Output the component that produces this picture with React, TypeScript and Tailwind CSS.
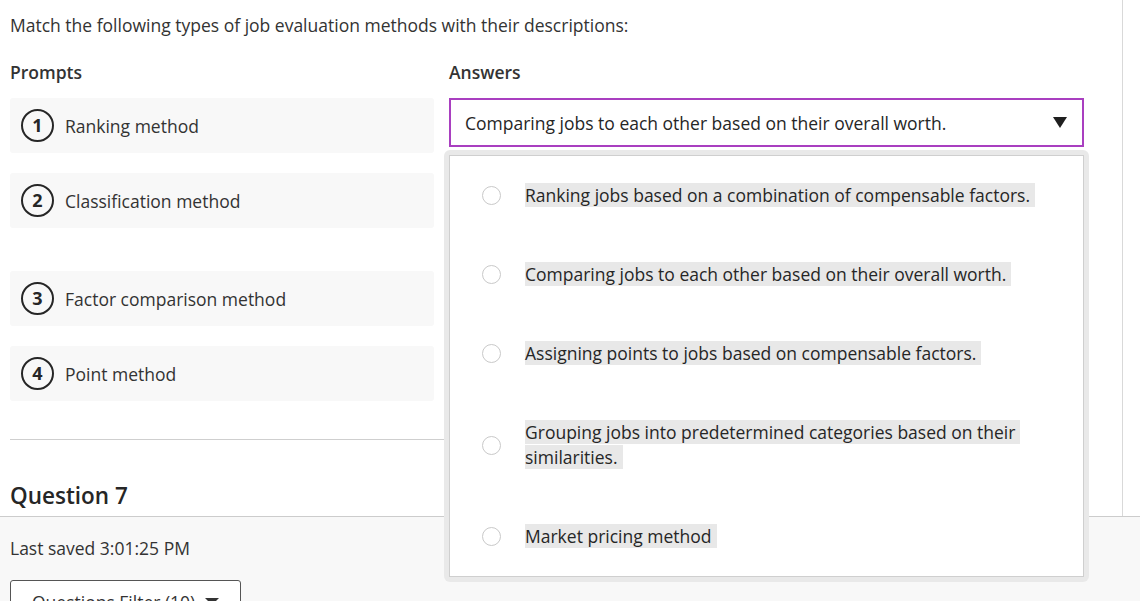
import React from "react";

const prompts = [
  { n: 1, text: "Ranking method", mt: "mt-0" },
  { n: 2, text: "Classification method", mt: "mt-[20px]" },
  { n: 3, text: "Factor comparison method", mt: "mt-[43px]" },
  { n: 4, text: "Point method", mt: "mt-[20px]" },
];

const options = [
  "Ranking jobs based on a combination of compensable factors.",
  "Comparing jobs to each other based on their overall worth.",
  "Assigning points to jobs based on compensable factors.",
  "Grouping jobs into predetermined categories based on their similarities.",
  "Market pricing method",
];

export default function App() {
  return (
    <div
      className="relative w-[1140px] h-[601px] overflow-hidden bg-white text-[#333333]"
      style={{ fontFamily: '"Open Sans", "Noto Sans", sans-serif' }}
    >
      <div className="h-[516px] w-[1123px] border-r border-[#d9d9d9] pl-[10px]">
        <p className="pt-[13px] text-[17.5px] leading-[24px]">
          Match the following types of job evaluation methods with their descriptions:
        </p>
        <div className="mt-[23px] flex">
          <div className="w-[424px] text-[17.5px] font-semibold leading-[24px]">Prompts</div>
          <div className="ml-[15px] text-[17.5px] font-semibold leading-[24px]">Answers</div>
        </div>
        <div className="mt-[14px] flex">
          <div className="w-[424px] flex flex-col">
            {prompts.map((p) => (
              <div
                key={p.n}
                className={`${p.mt} h-[55px] flex items-center rounded-[3px] bg-[#f8f8f8] pl-[11px]`}
              >
                <span className="flex h-[33px] w-[33px] items-center justify-center rounded-full border-2 border-[#262626] text-[18px] font-bold text-[#262626]">
                  {p.n}
                </span>
                <span className="ml-[11px] text-[17.5px] leading-[24px]">{p.text}</span>
              </div>
            ))}
          </div>
          <div className="ml-[15px] w-[635px]">
            <div className="flex h-[49px] items-center justify-between border-2 border-[#a93fc0] bg-white pl-[14px] pr-[14px]">
              <span className="text-[17.5px] leading-[24px] text-[#262626]">
                Comparing jobs to each other based on their overall worth.
              </span>
              <svg width="14" height="11" viewBox="0 0 14 11" className="mr-[1px]">
                <path d="M0 0 L14 0 L7 11 Z" fill="#1f1f1f" />
              </svg>
            </div>
          </div>
        </div>
        <div className="mt-[38px] h-px w-[440px] bg-[#cfcfcf]" />
        <h2 className="mt-[42px] text-[22.5px] font-semibold leading-[28px] text-[#262626]">Question 7</h2>
      </div>

      <div className="h-[85px] border-t border-[#cccccc] bg-[#f8f8f8] pl-[10px]">
        <p className="pt-[19px] text-[17.5px] leading-[24px]">Last saved 3:01:25 PM</p>
        <button className="mt-[20px] flex h-[40px] w-[231px] items-start rounded-[3px] border border-[#555555] bg-white pl-[21px] pt-[8px] text-[17.5px] text-[#333333]">
          <span>Questions Filter (10)</span>
          <svg width="14" height="8" viewBox="0 0 14 8" className="ml-[10px] mt-[9px]">
            <path d="M0 0 L14 0 L7 7 Z" fill="#333333" />
          </svg>
        </button>
      </div>

      {/* dropdown list overlay */}
      <div className="absolute left-[444px] top-[150px] w-[645px] rounded-[6px] bg-[#e9e9e9] p-[5px]">
        <div className="h-[422px] border border-[#cfcfcf] bg-white pt-[27px]">
          {options.map((o, i) => (
            <div key={i} className={`flex items-center ${i === 0 ? "" : "mt-[54px]"}`}>
              <span className="ml-[32px] h-[19px] w-[19px] shrink-0 rounded-full border border-[#c9c9c9] bg-white" />
              <span className="ml-[24px] max-w-[520px] text-[17.5px] leading-[25px] text-[#262626]">
                <span className="bg-[#e8e8e8] box-decoration-clone pr-[5px]">{o}</span>
              </span>
            </div>
          ))}
        </div>
      </div>
    </div>
  );
}
